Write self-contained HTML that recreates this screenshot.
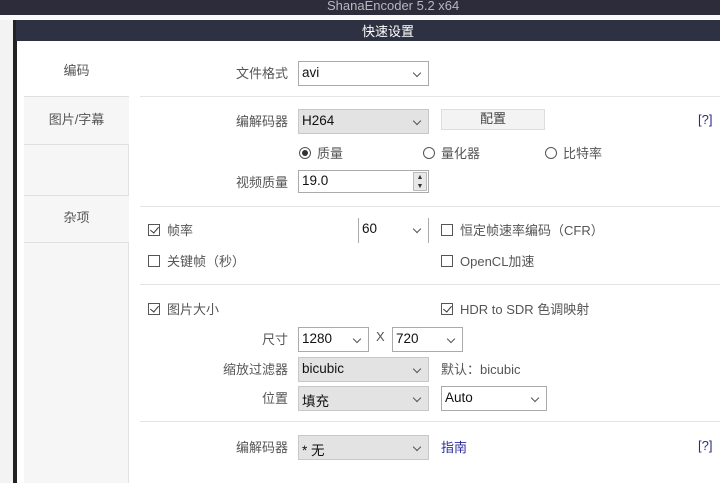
<!DOCTYPE html>
<html><head><meta charset="utf-8"><style>
*{box-sizing:border-box;margin:0;padding:0}
body{width:720px;height:483px;overflow:hidden;background:#f3f3f3;position:relative;font-family:"Liberation Sans","Noto Sans CJK SC",sans-serif;font-size:13px;color:#333}
.a{position:absolute;white-space:nowrap}
.lbl{position:absolute;text-align:right;width:140px;left:148px;color:#555;margin-top:-2px}
.sel{position:absolute;border:1px solid #aaa;background:#fff;height:25px;padding:3px 0 0 3px;color:#111;font-size:13.5px}
.sel.g{background:#e3e3e3;border-color:#c8c8c8}
.sel:after{content:"";position:absolute;right:8px;top:8px;width:5px;height:5px;border-right:1px solid #555;border-bottom:1px solid #555;transform:rotate(45deg)}
.hr{position:absolute;left:140px;right:0;height:1px;background:#e4e4e4}
.cb{position:absolute;width:12px;height:12px;border:1px solid #555;background:#fff}
.cb.on:after{content:"";position:absolute;left:3px;top:0px;width:4px;height:7px;border-right:1.5px solid #333;border-bottom:1.5px solid #333;transform:rotate(40deg)}
.rd{position:absolute;width:12px;height:12px;border:1px solid #555;border-radius:50%;background:#fff}
.rd.on:after{content:"";position:absolute;left:2px;top:2px;width:6px;height:6px;border-radius:50%;background:#333}
.t{position:absolute;color:#555;white-space:nowrap;margin-top:-2px}
.tab{position:absolute;left:24px;width:105px;text-align:center;color:#555;border-bottom:1px solid #e0e0e0;background:#f6f6f6}
</style></head><body>
<div class="a" style="left:0;top:0;width:720px;height:15px;background:#2c2c3a"></div>
<div class="a" style="left:327px;top:-2px;color:#b8b8c0;font-size:13px">ShanaEncoder 5.2 x64</div>
<div class="a" style="left:0;top:15px;width:720px;height:5px;background:#fafafa"></div>
<div class="a" style="left:13px;top:20px;width:707px;height:463px;background:#222"></div>
<div class="a" style="left:16px;top:20px;width:704px;height:21px;background:#2e3142"></div>
<div class="a" style="left:362px;top:21px;color:#fff;font-size:13px">快速设置</div>
<div class="a" style="left:17px;top:41px;width:703px;height:442px;background:#fff"></div>
<div class="a" style="left:24px;top:48px;width:105px;height:435px;background:#f6f6f6;border-right:1px solid #e2e2e2"></div>
<div class="tab" style="top:48px;height:49px;line-height:46px;background:#fff">编码</div>
<div class="tab" style="top:97px;height:48px;line-height:46px">图片/字幕</div>
<div class="tab" style="top:195px;height:48px;line-height:44px;border-top:1px solid #e0e0e0">杂项</div>

<div class="lbl" style="top:65px">文件格式</div>
<div class="sel" style="left:298px;top:61px;width:131px">avi</div>
<div class="hr" style="top:96px"></div>

<div class="lbl" style="top:113px">编解码器</div>
<div class="sel g" style="left:298px;top:109px;width:131px">H264</div>
<div class="a" style="left:441px;top:109px;width:104px;height:21px;background:#f3f3f3;border:1px solid #ddd;text-align:center;line-height:18px;color:#444">配置</div>
<div class="a" style="left:698px;top:112px;color:#2a2a8a">[?]</div>
<div class="rd on" style="left:299px;top:147px"></div><div class="t" style="left:317px;top:145px">质量</div>
<div class="rd" style="left:423px;top:147px"></div><div class="t" style="left:441px;top:145px">量化器</div>
<div class="rd" style="left:545px;top:147px"></div><div class="t" style="left:563px;top:145px">比特率</div>
<div class="lbl" style="top:174px">视频质量</div>
<div class="a" style="left:298px;top:170px;width:131px;height:23px;border:1px solid #aaa;background:#fff;padding:2px 0 0 3px;color:#111;font-size:13.5px">19.0</div>
<div class="a" style="left:413px;top:172px;width:14px;height:19px;background:#e8e8e8;border:1px solid #bbb;font-size:7px;line-height:9px;text-align:center">▲<br>▼</div>
<div class="hr" style="top:206px"></div>

<div class="cb on" style="left:148px;top:224px"></div><div class="t" style="left:167px;top:222px">帧率</div>
<div class="sel" style="left:358px;top:218px;width:71px;border-bottom:none;border-top:none">60</div>
<div class="cb" style="left:441px;top:224px"></div><div class="t" style="left:460px;top:222px">恒定帧速率编码（CFR）</div>
<div class="cb" style="left:148px;top:255px"></div><div class="t" style="left:167px;top:253px">关键帧（秒）</div>
<div class="cb" style="left:441px;top:255px"></div><div class="t" style="left:460px;top:253px">OpenCL加速</div>
<div class="hr" style="top:284px"></div>

<div class="cb on" style="left:148px;top:303px"></div><div class="t" style="left:167px;top:301px">图片大小</div>
<div class="cb on" style="left:441px;top:303px"></div><div class="t" style="left:460px;top:301px">HDR to SDR 色调映射</div>
<div class="lbl" style="top:331px">尺寸</div>
<div class="sel" style="left:298px;top:327px;width:71px">1280</div>
<div class="t" style="left:376px;top:331px">X</div>
<div class="sel" style="left:392px;top:327px;width:71px">720</div>
<div class="lbl" style="top:361px">缩放过滤器</div>
<div class="sel g" style="left:298px;top:357px;width:131px">bicubic</div>
<div class="t" style="left:441px;top:361px">默认：bicubic</div>
<div class="lbl" style="top:390px">位置</div>
<div class="sel g" style="left:298px;top:386px;width:131px">填充</div>
<div class="sel" style="left:441px;top:386px;width:106px">Auto</div>
<div class="hr" style="top:421px"></div>

<div class="lbl" style="top:439px">编解码器</div>
<div class="sel g" style="left:298px;top:435px;width:131px">* 无</div>
<div class="a" style="left:441px;top:437px;color:#2a2a9a">指南</div>
<div class="a" style="left:698px;top:438px;color:#2a2a8a">[?]</div>
</body></html>
